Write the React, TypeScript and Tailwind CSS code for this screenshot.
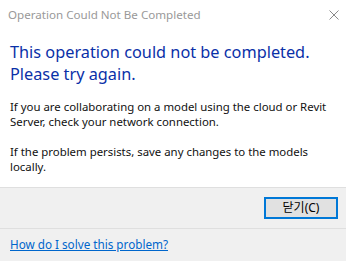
export default function App() {
  return (
    <div
      className="w-[346px] h-[261px] flex flex-col bg-white overflow-hidden"
      style={{ fontFamily: '"Noto Sans", "Noto Sans CJK KR", sans-serif' }}
    >
      {/* Title bar */}
      <div className="h-[30px] flex items-center justify-between pl-[8px] pr-[7px]">
        <span className="text-[11.6px] text-[#999999] leading-none">Operation Could Not Be Completed</span>
        <svg width="10" height="10" viewBox="0 0 10 10" className="text-[#8a8a8a]">
          <path d="M0.5 0.5L9.5 9.5M9.5 0.5L0.5 9.5" stroke="currentColor" strokeWidth="1" />
        </svg>
      </div>

      {/* Content */}
      <div className="flex-1 px-[10px] pt-[11px]">
        <h1 className="text-[16.3px] leading-[22px] text-[#0a30a8]">
          This operation could not be completed.
          <br />
          Please try again.
        </h1>
        <p className="mt-[15px] text-[11.4px] leading-[14.5px] text-[#111111]">
          If you are collaborating on a model using the cloud or Revit Server, check your network connection.
        </p>
        <p className="mt-[16px] text-[11.4px] leading-[14.5px] text-[#111111]">
          If the problem persists, save any changes to the models locally.
        </p>
      </div>

      {/* Button row */}
      <div className="h-[41px] bg-[#f0f0f0] border-t border-[#dfdfdf] flex items-center justify-end pr-[8px]">
        <button className="w-[74px] h-[22px] bg-[#e1e1e1] border-2 border-[#0078d7] text-[12px] leading-none text-black">
          닫기(C)
        </button>
      </div>

      {/* Link row */}
      <div className="h-[33px] bg-[#f0f0f0] border-t border-[#dfdfdf] flex items-center pl-[10px]">
        <a href="#" className="text-[11.7px] text-[#0066cc] underline leading-none">
          How do I solve this problem?
        </a>
      </div>
    </div>
  );
}
